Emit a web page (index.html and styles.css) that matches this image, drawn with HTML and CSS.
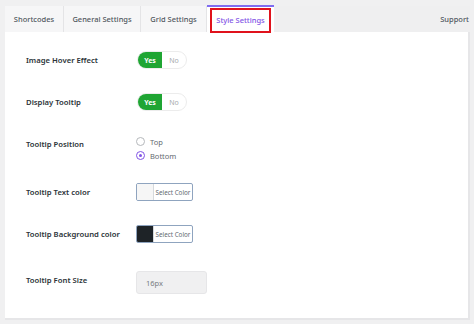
FILE: index.html
```html
<!DOCTYPE html>
<html lang="en">
<head>
    <meta charset="UTF-8">
    <meta name="viewport" content="width=device-width, initial-scale=1.0">
    <title>Style Settings</title>
    <link rel="stylesheet" href="styles.css">
</head>
<body>

<div class="wrap">
    <div class="tabs">
        <a class="tab">Shortcodes</a>
        <a class="tab">General Settings</a>
        <a class="tab">Grid Settings</a>
        <a class="tab active"><span class="highlight">Style Settings</span></a>
        <a class="tab support">Support</a>
    </div>

    <div class="panel">
        <div class="row">
            <label class="row-label">Image Hover Effect</label>
            <div class="toggle">
                <span class="on">Yes</span>
                <span class="off">No</span>
            </div>
        </div>

        <div class="row">
            <label class="row-label">Display Tooltip</label>
            <div class="toggle">
                <span class="on">Yes</span>
                <span class="off">No</span>
            </div>
        </div>

        <div class="row row-tight">
            <label class="row-label">Tooltip Position</label>
            <div class="radios">
                <div class="radio"><span class="dot"></span>Top</div>
                <div class="radio"><span class="dot checked"></span>Bottom</div>
            </div>
        </div>

        <div class="row">
            <label class="row-label">Tooltip Text color</label>
            <div class="color-pick">
                <span class="swatch"></span>
                <span class="pick-text">Select Color</span>
            </div>
        </div>

        <div class="row row-loose">
            <label class="row-label">Tooltip Background color</label>
            <div class="color-pick">
                <span class="swatch dark"></span>
                <span class="pick-text">Select Color</span>
            </div>
        </div>

        <div class="row">
            <label class="row-label">Tooltip Font Size</label>
            <div class="size-input">16px</div>
        </div>
    </div>
</div>

</body>
</html>
```

FILE: styles.css
```css
body {
    font-family: "Noto Sans", "Open Sans", sans-serif;
    background-color: #f0f0f1;
    color: #2c3338;
    margin: 0;
}

.wrap {
    margin: 6px 4px 0 5px;
    width: 465px;
}

.tabs {
    display: flex;
    height: 26px;
    background-color: #efeff0;
}

.tab {
    display: flex;
    align-items: center;
    justify-content: center;
    font-size: 7.5px;
    font-weight: 500;
    color: #50575e;
    background-color: #f6f6f7;
    border-right: 1px solid #e4e4e6;
    box-sizing: border-box;
}

.tab:nth-child(1) { width: 59px; }
.tab:nth-child(2) { width: 77px; }
.tab:nth-child(3) { width: 66px; }

.tab.active {
    width: 67px;
    background-color: #fff;
    border-right: none;
    position: relative;
}

.tab.active::before {
    content: "";
    position: absolute;
    left: 0;
    right: 0;
    top: -1px;
    height: 2px;
    background-color: #7f6cf0;
}

.highlight {
    display: flex;
    align-items: center;
    justify-content: center;
    width: 57px;
    height: 21px;
    margin-top: 2px;
    border: 2px solid #e0121c;
    color: #8254e6;
}

.tab.support {
    margin-left: auto;
    background: none;
    border: none;
    padding-right: 1px;
    color: #50575e;
}

.panel {
    background-color: #fff;
    border-right: 2px solid #e6e6e8;
    border-bottom: 2px solid #e6e6e8;
    padding: 19px 0 16px 21px;
    height: 251px;
}

.row {
    display: flex;
    align-items: flex-start;
    margin-bottom: 24px;
}

.row-tight {
    margin-bottom: 21px;
}

.row-loose {
    margin-bottom: 28px;
}

.row-label {
    width: 110px;
    line-height: 18px;
    font-size: 7.7px;
    font-weight: 600;
    color: #2c3338;
}

.toggle {
    display: flex;
    width: 50px;
    height: 18px;
    border-radius: 9px;
    border: 1px solid #ececec;
    box-sizing: border-box;
    overflow: hidden;
    font-size: 7px;
    margin-left: 1px;
}

.toggle span {
    flex: 1;
    display: flex;
    align-items: center;
    justify-content: center;
}

.toggle .on {
    background-color: #1fa533;
    color: #fff;
    font-weight: 700;
}

.toggle .off {
    color: #a7aaad;
}

.radios {
    display: flex;
    flex-direction: column;
    gap: 1px;
    font-size: 7.5px;
    color: #646970;
}

.radio {
    display: flex;
    align-items: center;
    height: 13px;
}

.dot {
    width: 7px;
    height: 7px;
    border: 1px solid #b5b8bb;
    border-radius: 50%;
    margin-right: 5px;
    position: relative;
}

.dot.checked {
    border-color: #8254e6;
}

.dot.checked::after {
    content: "";
    position: absolute;
    left: 2px;
    top: 2px;
    width: 3px;
    height: 3px;
    border-radius: 50%;
    background-color: #8254e6;
}

.color-pick {
    display: flex;
    width: 57px;
    height: 18px;
    border: 1px solid #8fa4bf;
    border-radius: 2px;
    box-sizing: border-box;
    overflow: hidden;
}

.swatch {
    width: 16px;
    background-color: #f6f6f6;
    border-right: 1px solid #d6d9dc;
}

.swatch.dark {
    background-color: #1e2327;
}

.pick-text {
    flex: 1;
    display: flex;
    align-items: center;
    justify-content: center;
    font-size: 6.3px;
    color: #646970;
}

.size-input {
    width: 71px;
    height: 23px;
    box-sizing: border-box;
    padding-left: 9px;
    display: flex;
    align-items: center;
    background-color: #f0f0f1;
    border: 1px solid #e6e6e8;
    border-radius: 3px;
    font-size: 7.5px;
    color: #787c82;
}
```
